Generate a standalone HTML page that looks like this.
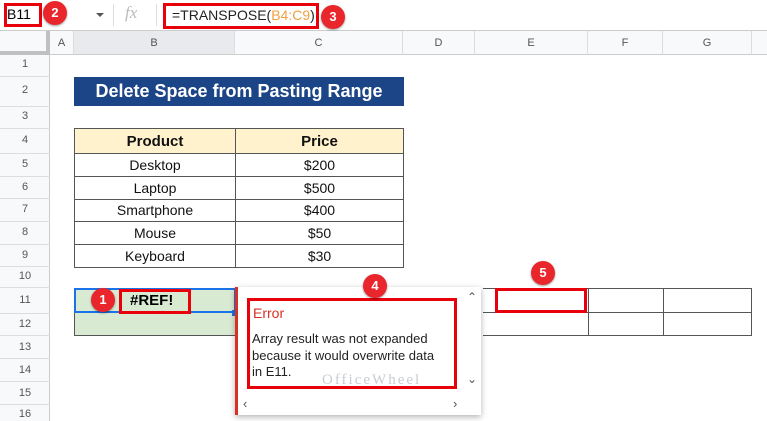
<!DOCTYPE html>
<html><head><style>
*{margin:0;padding:0;box-sizing:border-box}
body{width:767px;height:421px;background:#fff;font-family:"Liberation Sans",Arial,sans-serif;position:relative;overflow:hidden}
.a{position:absolute}
.rn{position:absolute;left:0;width:50px;text-align:center;font-size:11px;color:#555}
.hl{position:absolute;left:0;width:50px;height:1px;background:#ddd}
.ch{position:absolute;top:31px;height:24px;font-size:11px;color:#555;text-align:center;line-height:24px;border-right:1px solid #ddd;border-bottom:1px solid #ccc}
.badge{position:absolute;width:24px;height:24px;border-radius:50%;background:#e8262b;color:#fff;font-weight:bold;font-size:13px;text-align:center;line-height:24px;box-shadow:0 1px 2px rgba(0,0,0,.4)}
.rb{position:absolute;border:3px solid #e8000b}
table{border-collapse:collapse;position:absolute;left:74px;top:128px;width:330px}
td{border:1.5px solid #555;text-align:center;font-size:14px;color:#111;height:22.8px;padding:0}
</style></head><body>
<div class="a" style="left:0;top:0;width:767px;height:31px;background:#fff;border-bottom:1px solid #ccc"></div>
<div class="a" style="left:7px;top:6px;font-size:14px">B11</div>
<div class="a" style="left:96px;top:13px;width:0;height:0;border-left:4px solid transparent;border-right:4px solid transparent;border-top:4px solid #555"></div>
<div class="a" style="left:113px;top:4px;width:1px;height:22px;background:#ddd"></div>
<div class="a" style="left:125px;top:3px;font-size:17px;color:#bbb;font-style:italic;font-family:'Liberation Serif',serif">fx</div>
<div class="a" style="left:156px;top:4px;width:1px;height:22px;background:#ddd"></div>
<div class="a" style="left:172px;top:7px;font-size:14px;color:#222">=TRANSPOSE(<span style="color:#f0a040">B4:C9</span>)</div>
<div class="rb" style="left:4px;top:3px;width:38px;height:24px"></div>
<div class="rb" style="left:163px;top:3px;width:156px;height:26px"></div>
<div class="badge" style="left:43px;top:1px">2</div>
<div class="badge" style="left:321px;top:5px">3</div>
<div class="a" style="left:0;top:31px;width:50px;height:24px;background:#f8f9fa;border-right:4px solid #c0c0c0;border-bottom:4px solid #c0c0c0"></div>
<div class="ch" style="left:50px;width:24px;background:#f8f9fa">A</div>
<div class="ch" style="left:74px;width:161px;background:#e8eaed">B</div>
<div class="ch" style="left:235px;width:168px;background:#f8f9fa">C</div>
<div class="ch" style="left:403px;width:72px;background:#f8f9fa">D</div>
<div class="ch" style="left:475px;width:113px;background:#f8f9fa">E</div>
<div class="ch" style="left:588px;width:75px;background:#f8f9fa">F</div>
<div class="ch" style="left:663px;width:89px;background:#f8f9fa">G</div>
<div class="ch" style="left:752px;width:20px;background:#f8f9fa"></div>
<div class="a" style="left:0;top:55px;width:50px;height:366px;background:#f8f9fa;border-right:1px solid #ccc"></div>
<div class="hl" style="top:76px"></div><div class="hl" style="top:106px"></div><div class="hl" style="top:128px"></div><div class="hl" style="top:153px"></div><div class="hl" style="top:176px"></div><div class="hl" style="top:198px"></div><div class="hl" style="top:221px"></div><div class="hl" style="top:244px"></div><div class="hl" style="top:266px"></div><div class="hl" style="top:287px"></div><div class="hl" style="top:313px"></div><div class="hl" style="top:335px"></div><div class="hl" style="top:358px"></div><div class="hl" style="top:381px"></div><div class="hl" style="top:404px"></div>
<div class="rn" style="top:58px">1</div><div class="rn" style="top:84px">2</div><div class="rn" style="top:110px">3</div><div class="rn" style="top:134px">4</div><div class="rn" style="top:158px">5</div><div class="rn" style="top:181px">6</div><div class="rn" style="top:203px">7</div><div class="rn" style="top:226px">8</div><div class="rn" style="top:249px">9</div><div class="rn" style="top:270px">10</div><div class="rn" style="top:294px">11</div><div class="rn" style="top:318px">12</div><div class="rn" style="top:341px">13</div><div class="rn" style="top:364px">14</div><div class="rn" style="top:387px">15</div><div class="rn" style="top:408px">16</div>
<div class="a" style="left:74px;top:77px;width:330px;height:29px;background:#1c4587;color:#fff;font-weight:bold;font-size:18px;text-align:center;line-height:29px">Delete Space from Pasting Range</div>
<table>
<tr><td style="background:#fff2cc;font-weight:bold;font-size:15px;height:25px;width:161px">Product</td><td style="background:#fff2cc;font-weight:bold;font-size:15px">Price</td></tr>
<tr><td>Desktop</td><td>$200</td></tr>
<tr><td>Laptop</td><td>$500</td></tr>
<tr><td>Smartphone</td><td>$400</td></tr>
<tr><td>Mouse</td><td>$50</td></tr>
<tr><td>Keyboard</td><td>$30</td></tr>
</table>
<div class="a" style="left:74px;top:288px;width:162px;height:48px;background:#d9ead3;border:1px solid #555"></div>
<div class="a" style="left:74px;top:312px;width:162px;height:1px;background:#555"></div>
<div class="a" style="left:74px;top:288px;width:162px;height:25px;border:2px solid #1a73e8"></div>
<div class="a" style="left:232px;top:310px;width:6px;height:6px;background:#1a73e8"></div>
<div class="a" style="left:130px;top:292px;font-weight:bold;font-size:15px">#REF!</div>
<div class="rb" style="left:119px;top:289px;width:72px;height:25px"></div>
<div class="badge" style="left:91px;top:288px">1</div>
<div class="a" style="left:483px;top:288px;width:269px;height:48px;border-top:1px solid #555;border-bottom:1px solid #555;border-right:1px solid #555"></div>
<div class="a" style="left:483px;top:312px;width:269px;height:1px;background:#555"></div>
<div class="a" style="left:588px;top:288px;width:1px;height:48px;background:#555"></div>
<div class="a" style="left:663px;top:288px;width:1px;height:48px;background:#555"></div>
<div class="rb" style="left:495px;top:288px;width:92px;height:25px"></div>
<div class="badge" style="left:531px;top:261px">5</div>
<div class="a" style="left:235px;top:287px;width:246px;height:128px;background:#fff;box-shadow:0 2px 6px rgba(0,0,0,.3);border-left:3px solid #d93025"></div>
<div class="a" style="left:467px;top:290px;font-size:12px;color:#555">&#8963;</div>
<div class="a" style="left:467px;top:372px;font-size:12px;color:#555">&#8964;</div>
<div class="a" style="left:243px;top:396px;font-size:13px;color:#555">&#8249;</div>
<div class="a" style="left:453px;top:396px;font-size:13px;color:#555">&#8250;</div>
<div class="a" style="left:253px;top:305px;color:#d93025;font-size:14px">Error</div>
<div class="a" style="left:252px;top:331px;width:195px;font-size:13px;line-height:16.5px;color:#222">Array result was not expanded because it would overwrite data in E11.</div>
<div class="a" style="left:322px;top:372px;font-size:15px;color:#c8ccd4;letter-spacing:2px;font-family:'Liberation Serif',serif">OfficeWheel</div>
<div class="rb" style="left:247px;top:298px;width:210px;height:91px"></div>
<div class="badge" style="left:363px;top:274px">4</div>
</body></html>
